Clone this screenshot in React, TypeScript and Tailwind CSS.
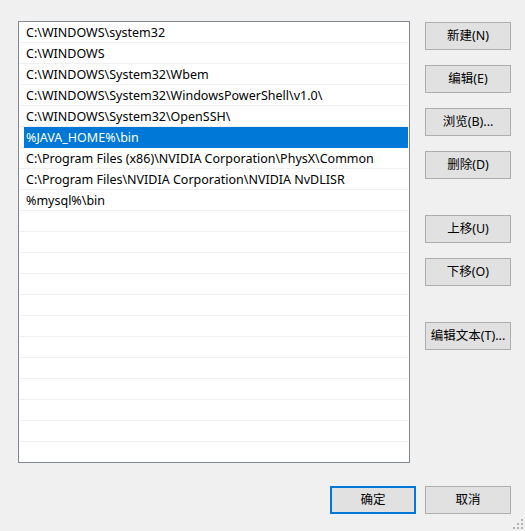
const paths = [
  'C:\\WINDOWS\\system32',
  'C:\\WINDOWS',
  'C:\\WINDOWS\\System32\\Wbem',
  'C:\\WINDOWS\\System32\\WindowsPowerShell\\v1.0\\',
  'C:\\WINDOWS\\System32\\OpenSSH\\',
  '%JAVA_HOME%\\bin',
  'C:\\Program Files (x86)\\NVIDIA Corporation\\PhysX\\Common',
  'C:\\Program Files\\NVIDIA Corporation\\NVIDIA NvDLISR',
  '%mysql%\\bin',
];

const SELECTED = 5;
const ROW_COUNT = 21;

function Button({ label, primary = false }: { label: string; primary?: boolean }) {
  return (
    <button
      className={
        primary
          ? 'w-[86px] h-[28px] bg-[#e1e1e1] border-2 border-[#0078d7] text-[12.5px] text-black leading-none'
          : 'w-[86px] h-[28px] bg-[#e1e1e1] border border-[#adadad] text-[12.5px] text-black leading-none'
      }
    >
      {label}
    </button>
  );
}

function SizeGrip() {
  return (
    <svg width="12" height="12" viewBox="0 0 12 12" className="absolute right-[1px] bottom-[1px]">
      <g fill="#b4b4b4">
        <rect x="9" y="1" width="2" height="2" />
        <rect x="5" y="5" width="2" height="2" />
        <rect x="9" y="5" width="2" height="2" />
        <rect x="1" y="9" width="2" height="2" />
        <rect x="5" y="9" width="2" height="2" />
        <rect x="9" y="9" width="2" height="2" />
      </g>
    </svg>
  );
}

export default function App() {
  const rows = Array.from({ length: ROW_COUNT }, (_, i) => paths[i] ?? '');

  return (
    <div
      className="relative w-[525px] h-[531px] bg-[#f0f0f0] overflow-hidden flex flex-col"
      style={{ fontFamily: '"Segoe UI", "Noto Sans", "Noto Sans CJK SC", sans-serif' }}
    >
      <div className="flex pt-[21px] pl-[18px]">
        {/* path list */}
        <div className="w-[392px] h-[442px] border border-[#828790] bg-white px-px overflow-hidden">
          {rows.map((p, i) => (
            <div key={i} className="h-[21px] border-b border-[#f0f0f0] flex">
              {i === SELECTED ? (
                <div className="ml-[4px] flex-1 h-[21px] -mb-px bg-[#0078d7] text-white text-[12.5px] leading-[22px] pl-[2px] whitespace-nowrap">
                  {p}
                </div>
              ) : (
                <div className="ml-[4px] flex-1 h-[20px] text-black text-[12.5px] leading-[22px] pl-[2px] whitespace-nowrap">
                  {p}
                </div>
              )}
            </div>
          ))}
        </div>

        {/* side buttons */}
        <div className="ml-[15px] mt-px flex flex-col">
          <div className="flex flex-col gap-[15px]">
            <Button label="新建(N)" />
            <Button label="编辑(E)" />
            <Button label="浏览(B)..." />
            <Button label="删除(D)" />
          </div>
          <div className="mt-[36px] flex flex-col gap-[15px]">
            <Button label="上移(U)" />
            <Button label="下移(O)" />
          </div>
          <div className="mt-[36px]">
            <Button label="编辑文本(T)..." />
          </div>
        </div>
      </div>

      <div className="flex justify-end gap-[9px] pr-[14px] mt-[23px]">
        <Button label="确定" primary />
        <Button label="取消" />
      </div>

      <SizeGrip />
    </div>
  );
}
